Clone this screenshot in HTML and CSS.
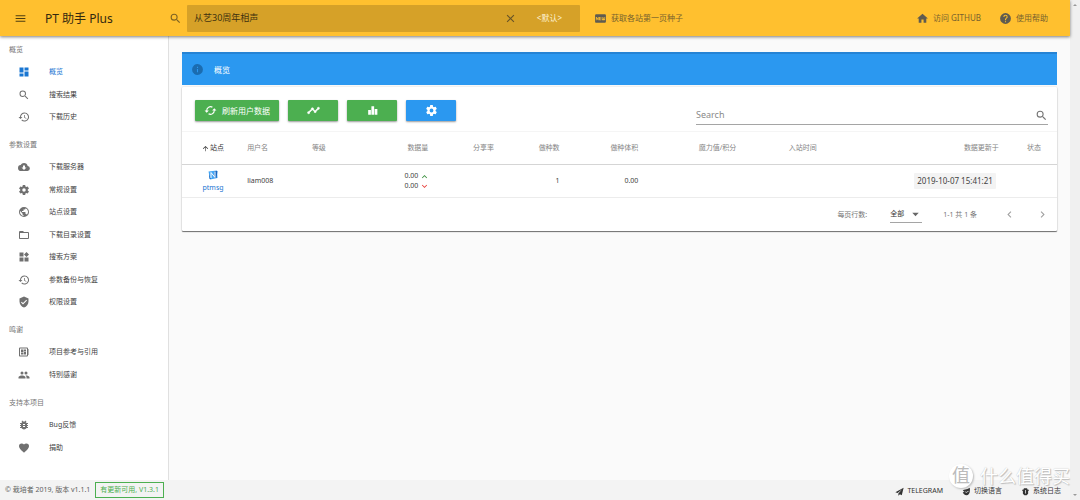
FILE: index.html
```html
<!DOCTYPE html>
<html lang="zh-CN">
<head>
    <meta charset="utf-8">
    <title>PT 助手 Plus</title>
    <link rel="stylesheet" href="styles.css">
</head>
<body>
    <!-- Icons -->
    <svg class="sprite" aria-hidden="true">
        <symbol id="menu" viewBox="0 0 24 24"><path d="M3 18h18v-2H3v2zm0-5h18v-2H3v2zm0-7v2h18V6H3z"/></symbol>
        <symbol id="search" viewBox="0 0 24 24"><path d="M15.5 14h-.79l-.28-.27A6.47 6.47 0 0 0 16 9.5 6.5 6.5 0 1 0 9.5 16c1.61 0 3.09-.59 4.23-1.57l.27.28v.79l5 4.99L20.49 19l-4.99-5zm-6 0a4.5 4.5 0 1 1 0-9 4.5 4.5 0 0 1 0 9z"/></symbol>
        <symbol id="close" viewBox="0 0 24 24"><path d="M19 6.41 17.59 5 12 10.59 6.41 5 5 6.41 10.59 12 5 17.59 6.41 19 12 13.41 17.59 19 19 17.59 13.41 12z"/></symbol>
        <symbol id="new" viewBox="0 0 24 24"><path d="M20 4H4a2 2 0 0 0-2 2v12c0 1.1.9 2 2 2h16a2 2 0 0 0 2-2V6a2 2 0 0 0-2-2zM8.5 15H7.3l-2.55-3.5V15H3.5V9h1.25l2.5 3.5V9H8.5v6zm5-4.74H11v1.12h2.5v1.26H11v1.11h2.5V15h-4V9h4v1.26zm7 3.74a1 1 0 0 1-1 1h-4a1 1 0 0 1-1-1V9h1.25v4.51h1.13V9.99h1.25v3.51h1.12V9h1.25v5z"/></symbol>
        <symbol id="home" viewBox="0 0 24 24"><path d="M10 20v-6h4v6h5v-8h3L12 3 2 12h3v8z"/></symbol>
        <symbol id="help" viewBox="0 0 24 24"><path d="M12 2a10 10 0 1 0 0 20 10 10 0 0 0 0-20zm1 17h-2v-2h2v2zm2.07-7.75-.9.92C13.45 12.9 13 13.5 13 15h-2v-.5c0-1.1.45-2.1 1.17-2.83l1.24-1.26A2 2 0 1 0 10 9H8a4 4 0 0 1 8 0c0 .88-.36 1.68-.93 2.25z"/></symbol>
        <symbol id="dashboard" viewBox="0 0 24 24"><path d="M3 13h8V3H3v10zm0 8h8v-6H3v6zm10 0h8V11h-8v10zm0-18v6h8V3h-8z"/></symbol>
        <symbol id="history" viewBox="0 0 24 24"><path d="M13 3a9 9 0 0 0-9 9H1l3.89 3.89.07.14L9 12H6a7 7 0 1 1 2.06 4.94l-1.42 1.42A9 9 0 1 0 13 3zm-1 5v5l4.28 2.54.72-1.21-3.5-2.08V8H12z"/></symbol>
        <symbol id="cloud" viewBox="0 0 24 24"><path d="M19.35 10.04A7.49 7.49 0 0 0 12 4C9.11 4 6.6 5.64 5.35 8.04A6 6 0 0 0 6 20h13a5 5 0 0 0 .35-9.96zM17 13l-5 5-5-5h3V9h4v4h3z"/></symbol>
        <symbol id="settings" viewBox="0 0 24 24"><path d="M19.43 12.98c.04-.32.07-.64.07-.98s-.03-.66-.07-.98l2.11-1.65c.19-.15.24-.42.12-.64l-2-3.46c-.12-.22-.39-.3-.61-.22l-2.49 1c-.52-.4-1.08-.73-1.69-.98l-.38-2.65A.49.49 0 0 0 14 2h-4c-.25 0-.46.18-.49.42l-.38 2.65c-.61.25-1.17.59-1.69.98l-2.49-1c-.23-.09-.49 0-.61.22l-2 3.46c-.13.22-.07.49.12.64l2.11 1.65c-.04.32-.07.65-.07.98s.03.66.07.98l-2.11 1.65c-.19.15-.24.42-.12.64l2 3.46c.12.22.39.3.61.22l2.49-1c.52.4 1.08.73 1.69.98l.38 2.65c.03.24.24.42.49.42h4c.25 0 .46-.18.49-.42l.38-2.65c.61-.25 1.17-.59 1.69-.98l2.49 1c.23.09.49 0 .61-.22l2-3.46c.12-.22.07-.49-.12-.64l-2.11-1.65zM12 15.5a3.5 3.5 0 1 1 0-7 3.5 3.5 0 0 1 0 7z"/></symbol>
        <symbol id="globe" viewBox="0 0 24 24"><path d="M12 2a10 10 0 1 0 0 20 10 10 0 0 0 0-20zm-1 17.93A8 8 0 0 1 4.21 10.21L9 15v1c0 1.1.9 2 2 2v1.93zm6.9-2.54A2 2 0 0 0 16 16h-1v-3a1 1 0 0 0-1-1H8v-2h2a1 1 0 0 0 1-1V7h2a2 2 0 0 0 2-2v-.41a8 8 0 0 1 2.9 12.8z"/></symbol>
        <symbol id="folder" viewBox="0 0 24 24"><path d="M20 6h-8l-2-2H4a2 2 0 0 0-2 2v12c0 1.1.9 2 2 2h16a2 2 0 0 0 2-2V8a2 2 0 0 0-2-2zm0 12H4V8h16v10z"/></symbol>
        <symbol id="widgets" viewBox="0 0 24 24"><path d="M3 3h8v8H3zM3 13h8v8H3zM13 13h8v8h-8zM17 2l5 5-5 5-5-5z"/></symbol>
        <symbol id="shield" viewBox="0 0 24 24"><path d="M12 1 3 5v6c0 5.55 3.84 10.74 9 12 5.16-1.26 9-6.45 9-12V5l-9-4zm-2 16-4-4 1.41-1.41L10 14.17l6.59-6.59L18 9l-8 8z"/></symbol>
        <symbol id="board" viewBox="0 0 24 24"><path d="M22 9V7h-2V5a2 2 0 0 0-2-2H4a2 2 0 0 0-2 2v14c0 1.1.9 2 2 2h14a2 2 0 0 0 2-2v-2h2v-2h-2v-2h2v-2h-2V9h2zm-4 10H4V5h14v14zM6 13h5v4H6zm6-6h4v3h-4zM6 7h5v5H6zm6 4h4v6h-4z"/></symbol>
        <symbol id="people" viewBox="0 0 24 24"><path d="M16 11a3 3 0 1 0 0-6 3 3 0 0 0 0 6zm-8 0a3 3 0 1 0 0-6 3 3 0 0 0 0 6zm0 2c-2.33 0-7 1.17-7 3.5V19h14v-2.5C15 14.17 10.33 13 8 13zm8 0c-.29 0-.62.02-.97.05 1.16.84 1.97 1.97 1.97 3.45V19h6v-2.5c0-2.33-4.67-3.5-7-3.5z"/></symbol>
        <symbol id="bug" viewBox="0 0 24 24"><path d="M20 8h-2.81a5.99 5.99 0 0 0-1.82-1.96L17 4.41 15.59 3l-2.17 2.17a6 6 0 0 0-2.83 0L8.41 3 7 4.41l1.62 1.63C7.88 6.55 7.26 7.22 6.81 8H4v2h2.09c-.05.33-.09.66-.09 1v1H4v2h2v1c0 .34.04.67.09 1H4v2h2.81a6 6 0 0 0 10.38 0H20v-2h-2.09c.05-.33.09-.66.09-1v-1h2v-2h-2v-1c0-.34-.04-.67-.09-1H20V8zm-6 8h-4v-2h4v2zm0-4h-4v-2h4v2z"/></symbol>
        <symbol id="heart" viewBox="0 0 24 24"><path d="m12 21.35-1.45-1.32C5.4 15.36 2 12.28 2 8.5A5.45 5.45 0 0 1 7.5 3c1.74 0 3.41.81 4.5 2.09A6.04 6.04 0 0 1 16.5 3 5.45 5.45 0 0 1 22 8.5c0 3.78-3.4 6.86-8.55 11.54L12 21.35z"/></symbol>
        <symbol id="info" viewBox="0 0 24 24"><path d="M12 2a10 10 0 1 0 0 20 10 10 0 0 0 0-20zm1 15h-2v-6h2v6zm0-8h-2V7h2v2z"/></symbol>
        <symbol id="refresh" viewBox="0 0 24 24"><path d="m19 8-4 4h3a6 6 0 0 1-8.8 5.3l-1.46 1.46A8 8 0 0 0 20 12h3l-4-4zM6 12a6 6 0 0 1 8.8-5.3l1.46-1.46A8 8 0 0 0 4 12H1l4 4 4-4H6z"/></symbol>
        <symbol id="timeline" viewBox="0 0 24 24"><path d="M23 8a2 2 0 0 1-2.51 1.93l-3.56 3.55a2 2 0 1 1-3.86 0l-2.55-2.55c-.33.09-.71.09-1.04 0l-4.55 4.56A2 2 0 1 1 3 14c.18 0 .35.02.51.07l4.56-4.55a2 2 0 1 1 3.86 0l2.55 2.55c.33-.09.71-.09 1.04 0l3.55-3.56A2 2 0 1 1 23 8z" stroke="currentColor"/></symbol>
        <symbol id="chart" viewBox="0 0 24 24"><path d="M4 11h5v9H4zM10 4h5v16h-5zM16 9h5v11h-5z"/></symbol>
        <symbol id="up" viewBox="0 0 24 24"><path d="m3 12 2 2 6-6v13h2V8l6 6 2-2-9-9z"/></symbol>
        <symbol id="chevron-up" viewBox="0 0 24 24"><path d="m12 7-9 9 2 2 7-7 7 7 2-2z"/></symbol>
        <symbol id="chevron-down" viewBox="0 0 24 24"><path d="m12 17-9-9 2-2 7 7 7-7 2 2z"/></symbol>
        <symbol id="left" viewBox="0 0 24 24"><path d="M15.41 7.41 14 6l-6 6 6 6 1.41-1.41L10.83 12z"/></symbol>
        <symbol id="right" viewBox="0 0 24 24"><path d="M10 6 8.59 7.41 13.17 12l-4.58 4.59L10 18l6-6z"/></symbol>
        <symbol id="drop" viewBox="0 0 24 24"><path d="m5 8 7 8 7-8z"/></symbol>
        <symbol id="plane" viewBox="0 0 24 24"><path d="M23 2 1 14l6 2L19 6 9 17v6l4-4 5 3z"/></symbol>
        <symbol id="language" viewBox="0 0 24 24"><path d="M2 9c4-4 8-2 12-4l7-3v7c0 8-4 13-9 13-5 0-9-4-10-8l5-1zm6 4 4 2 6-4-1-1-5 3-3-1z"/></symbol>
        <symbol id="log" viewBox="0 0 24 24"><path d="M8 3h8l2 4h3v3h-2v8l-4 4H9l-4-4v-8H3V7h3zm3 5v9h2V8z"/></symbol>
    </svg>

    <div class="app">
        <header class="topbar">
            <button class="icon-btn menu-btn" aria-label="菜单"><svg class="icon-lg"><use href="#menu"/></svg></button>
            <h1 class="brand">PT 助手 Plus</h1>
            <label class="search-icon" for="keyword"><svg class="icon-lg"><use href="#search"/></svg></label>
            <div class="search-box">
                <input type="text" id="keyword" value="从艺30周年相声" aria-label="搜索">
                <button class="icon-btn" aria-label="清除"><svg class="icon-lg"><use href="#close"/></svg></button>
                <button class="scheme">&lt;默认&gt;</button>
            </div>
            <a class="top-link" href="#"><svg class="icon-lg"><use href="#new"/></svg>获取各站第一页种子</a>
            <nav class="top-right">
                <a class="top-link" href="#"><svg class="icon-lg"><use href="#home"/></svg>访问 GITHUB</a>
                <a class="top-link" href="#"><svg class="icon-lg"><use href="#help"/></svg>使用帮助</a>
            </nav>
        </header>

        <div class="body">
            <nav class="sidebar">
                <h2>概览</h2>
                <ul>
                    <li><a class="active" href="#"><svg class="icon"><use href="#dashboard"/></svg>概览</a></li>
                    <li><a href="#"><svg class="icon"><use href="#search"/></svg>搜索结果</a></li>
                    <li><a href="#"><svg class="icon"><use href="#history"/></svg>下载历史</a></li>
                </ul>
                <h2>参数设置</h2>
                <ul>
                    <li><a href="#"><svg class="icon"><use href="#cloud"/></svg>下载服务器</a></li>
                    <li><a href="#"><svg class="icon"><use href="#settings"/></svg>常规设置</a></li>
                    <li><a href="#"><svg class="icon"><use href="#globe"/></svg>站点设置</a></li>
                    <li><a href="#"><svg class="icon"><use href="#folder"/></svg>下载目录设置</a></li>
                    <li><a href="#"><svg class="icon"><use href="#widgets"/></svg>搜索方案</a></li>
                    <li><a href="#"><svg class="icon"><use href="#history"/></svg>参数备份与恢复</a></li>
                    <li><a href="#"><svg class="icon"><use href="#shield"/></svg>权限设置</a></li>
                </ul>
                <h2>鸣谢</h2>
                <ul>
                    <li><a href="#"><svg class="icon"><use href="#board"/></svg>项目参考与引用</a></li>
                    <li><a href="#"><svg class="icon"><use href="#people"/></svg>特别感谢</a></li>
                </ul>
                <h2>支持本项目</h2>
                <ul>
                    <li><a href="#"><svg class="icon"><use href="#bug"/></svg>Bug反馈</a></li>
                    <li><a href="#"><svg class="icon"><use href="#heart"/></svg>捐助</a></li>
                </ul>
            </nav>

            <main class="content">
                <div class="alert"><svg class="icon-lg"><use href="#info"/></svg>概览</div>

                <section class="card">
                    <div class="toolbar">
                        <button class="btn btn-wide"><svg class="icon-lg"><use href="#refresh"/></svg>刷新用户数据</button>
                        <button class="btn" aria-label="趋势"><svg class="icon-lg"><use href="#timeline"/></svg></button>
                        <button class="btn" aria-label="统计"><svg class="icon-lg"><use href="#chart"/></svg></button>
                        <button class="btn btn-blue" aria-label="设置"><svg class="icon-lg"><use href="#settings"/></svg></button>
                        <div class="filter">
                            <input type="text" id="filter" placeholder="Search">
                            <label for="filter" aria-label="Search"><svg class="icon-lg"><use href="#search"/></svg></label>
                        </div>
                    </div>

                    <table>
                        <colgroup>
                            <col class="c-site"><col class="c-user"><col class="c-level"><col class="c-data">
                            <col class="c-ratio"><col class="c-seeds"><col class="c-size"><col class="c-bonus">
                            <col class="c-join"><col class="c-update"><col class="c-status">
                        </colgroup>
                        <thead>
                            <tr>
                                <th class="center sorted"><svg class="icon-xs"><use href="#up"/></svg>站点</th>
                                <th>用户名</th>
                                <th>等级</th>
                                <th class="right">数据量</th>
                                <th class="right">分享率</th>
                                <th class="right">做种数</th>
                                <th class="right">做种体积</th>
                                <th class="right">魔力值/积分</th>
                                <th class="center">入站时间</th>
                                <th class="right">数据更新于</th>
                                <th class="right">状态</th>
                            </tr>
                        </thead>
                        <tbody>
                            <tr>
                                <td class="center">
                                    <a class="site" href="#">
                                        <svg class="site-logo" viewBox="0 0 20 20"><path fill="#42a5f5" d="M1 3 18 1 19 16 4 19z"/><path fill="#1565c0" d="M13 2h6l-2 14h-4zM2 8l4 9-3 1z"/><path fill="none" stroke="#fff" stroke-width="2" d="M6 16V5l8 10V3"/></svg>
                                        ptmsg
                                    </a>
                                </td>
                                <td>liam008</td>
                                <td></td>
                                <td class="right">
                                    <div class="amount">0.00 <svg class="icon-xs green"><use href="#chevron-up"/></svg></div>
                                    <div class="amount">0.00 <svg class="icon-xs red"><use href="#chevron-down"/></svg></div>
                                </td>
                                <td></td>
                                <td class="right">1</td>
                                <td class="right">0.00</td>
                                <td></td>
                                <td></td>
                                <td class="right"><span class="chip">2019-10-07 15:41:21</span></td>
                                <td></td>
                            </tr>
                        </tbody>
                    </table>

                    <div class="pager">
                        <label for="rows">每页行数:</label>
                        <div class="select">
                            <select id="rows"><option>全部</option></select>
                            <svg class="icon"><use href="#drop"/></svg>
                        </div>
                        <span>1-1 共 1 条</span>
                        <button class="icon-btn" aria-label="上一页" disabled><svg class="icon-lg"><use href="#left"/></svg></button>
                        <button class="icon-btn" aria-label="下一页" disabled><svg class="icon-lg"><use href="#right"/></svg></button>
                    </div>
                </section>
            </main>
        </div>

        <footer class="footer">
            <span>© 栽培者 2019, 版本 v1.1.1</span>
            <a class="update" href="#">有更新可用, V1.3.1</a>
            <nav class="footer-links">
                <a href="#"><svg class="icon-sm"><use href="#plane"/></svg>TELEGRAM</a>
                <a href="#"><svg class="icon-sm"><use href="#language"/></svg>切换语言</a>
                <a href="#"><svg class="icon-sm"><use href="#log"/></svg>系统日志</a>
            </nav>
        </footer>
    </div>

    <div class="scrollbar" aria-hidden="true"><i class="tri-up"></i><i class="tri-down"></i></div>
    <div class="watermark"><span class="seal">值</span>什么值得买</div>
</body>
</html>
```
FILE: styles.css
```css
* {
    box-sizing: border-box;
}

body {
    margin: 0;
    display: flex;
    height: 100vh;
    overflow: hidden;
    background: #fafafa;
    color: #424242;
    font-family: "Noto Sans", "Noto Sans CJK SC", sans-serif;
    font-size: 7px;
    line-height: 10px;
}

a {
    color: inherit;
    text-decoration: none;
}

button, input, select {
    font: inherit;
    color: inherit;
    border: none;
    background: none;
    padding: 0;
    outline: none;
}

svg {
    fill: currentColor;
    flex: none;
}

.sprite {
    display: none;
}

.icon-xs {
    width: 7px;
    height: 7px;
}

.icon-sm {
    width: 9px;
    height: 9px;
}

.icon {
    width: 12px;
    height: 12px;
}

.icon-lg {
    width: 13px;
    height: 13px;
}

.icon-btn {
    display: flex;
}

.app {
    flex: 1;
    min-width: 0;
    display: flex;
    flex-direction: column;
}

/* Top bar */
.topbar {
    display: flex;
    align-items: center;
    height: 36px;
    padding: 0 22px 0 14px;
    background: #ffc02f;
    color: #665328;
    box-shadow: 0 1px 3px rgba(0, 0, 0, 0.5);
    z-index: 1;
}

.menu-btn {
    color: #4d3c10;
}

.brand {
    width: 124px;
    margin: 0 0 0 18px;
    padding-top: 2px;
    font-size: 12px;
    line-height: 18px;
    font-weight: 400;
    color: #33290f;
}

.search-icon {
    display: flex;
    margin-right: 5px;
    color: #806423;
}

.search-box {
    display: flex;
    align-items: center;
    flex: 0 1 393px;
    height: 27px;
    padding: 0 18px 0 7px;
    border-radius: 1px;
    background: #d6a128;
}

    .search-box input {
        flex: 1;
        min-width: 0;
        font-size: 9px;
        color: #40310f;
    }

.scheme {
    margin-left: 20px;
    font-size: 8px;
    color: #fff3d6;
}

.top-link {
    display: flex;
    align-items: center;
    gap: 4px;
    margin-left: 14px;
    font-size: 8px;
    color: #78622e;
}

    .top-link svg {
        color: #5f5b50;
    }

.top-right {
    display: flex;
    gap: 4px;
    margin-left: auto;
}

/* Side menu */
.body {
    display: flex;
    flex: 1;
    min-height: 0;
}

.sidebar {
    width: 169px;
    padding-top: 2px;
    border-right: 1px solid #e0e0e0;
    background: #fff;
}

    .sidebar h2 {
        margin: 0;
        padding-left: 9px;
        font-size: 7px;
        line-height: 23px;
        font-weight: 400;
        color: #757575;
    }

    .sidebar ul {
        margin: 0 0 5px;
        padding: 0;
        list-style: none;
    }

    .sidebar li {
        height: 22px;
    }

        .sidebar li:nth-child(even) {
            height: 23px;
        }

    .sidebar a {
        display: flex;
        align-items: center;
        gap: 19px;
        height: 100%;
        padding-left: 18px;
    }

        .sidebar a svg {
            color: #707070;
        }

        .sidebar a.active,
        .sidebar a.active svg {
            color: #1976d2;
        }

/* Content */
.content {
    flex: 1;
    min-width: 0;
    padding: 16px 13px;
}

.alert {
    display: flex;
    align-items: center;
    gap: 10px;
    height: 33px;
    padding-left: 9px;
    border-top: 2px solid #2583d4;
    background: #2b98f0;
    color: #fff;
    font-size: 8px;
}

    .alert svg {
        color: #1b6cb0;
    }

.card {
    margin-top: 2px;
    border-radius: 1px;
    background: #fff;
    box-shadow: 0 1px 1px rgba(0, 0, 0, 0.55), 0 0 2px rgba(0, 0, 0, 0.15);
}

.toolbar {
    display: flex;
    align-items: flex-start;
    gap: 9px;
    padding: 13px 9px 6px 13px;
}

.btn {
    display: flex;
    align-items: center;
    justify-content: center;
    gap: 5px;
    width: 50px;
    height: 21px;
    border-radius: 1px;
    background: #4caf50;
    color: #fff;
    font-size: 8px;
    box-shadow: 0 1px 2px rgba(0, 0, 0, 0.4);
}

.btn-wide {
    width: 84px;
}

.btn-blue {
    background: #2b98f0;
}

.filter {
    display: flex;
    align-items: center;
    flex: 0 1 352px;
    height: 19px;
    margin: 6px 0 0 auto;
    border-bottom: 1px solid #a5a5a5;
    color: #757575;
}

    .filter input {
        flex: 1;
        min-width: 0;
        font-size: 9px;
    }

        .filter input::placeholder {
            color: #8a8a8a;
        }

    .filter label {
        display: flex;
    }

/* Table */
table {
    width: 100%;
    table-layout: fixed;
    border-collapse: collapse;
}

.c-site { width: 7.1%; }
.c-user { width: 7.4%; }
.c-level { width: 8.7%; }
.c-data { width: 5.3%; }
.c-ratio { width: 7.5%; }
.c-seeds { width: 7.5%; }
.c-size { width: 9%; }
.c-bonus { width: 11.2%; }
.c-join { width: 14.5%; }
.c-update { width: 15.5%; }
.c-status { width: 6.3%; }

th, td {
    padding: 0 3px;
    text-align: left;
    white-space: nowrap;
}

th {
    height: 33px;
    border-top: 1px solid #f5f5f5;
    border-bottom: 1px solid #d5d5d5;
    font-weight: 400;
    color: #858585;
}

    th:last-child {
        padding-right: 16px;
    }

td {
    height: 33px;
    border-bottom: 1px solid #ececec;
}

.center {
    text-align: center;
}

.right {
    text-align: right;
}

.sorted {
    color: #333;
}

    .sorted svg {
        vertical-align: middle;
        margin-right: 1px;
    }

.site {
    display: flex;
    flex-direction: column;
    align-items: center;
    gap: 3px;
    color: #1976d2;
}

.site-logo {
    width: 10px;
    height: 10px;
}

.amount {
    display: flex;
    align-items: center;
    justify-content: flex-end;
    gap: 3px;
}

.green {
    color: #388e3c;
}

.red {
    color: #e53935;
}

.chip {
    display: inline-block;
    margin-right: 3px;
    padding: 3px;
    border-radius: 1px;
    background: #f3f3f3;
    font-size: 8px;
}

.pager {
    display: flex;
    align-items: center;
    justify-content: flex-end;
    height: 33px;
    padding-right: 8px;
    color: #757575;
}

.select {
    display: flex;
    align-items: center;
    width: 32px;
    height: 17px;
    margin: 0 21px 0 23px;
    border-bottom: 1px solid #a5a5a5;
    color: #333;
}

    .select select {
        appearance: none;
        flex: 1;
        min-width: 0;
    }

    .select svg {
        width: 13px;
        height: 11px;
        color: #666;
    }

.pager button {
    margin-left: 20px;
    color: #a0a0a0;
}

.pager span + button {
    margin-left: 26px;
}

/* Footer */
.footer {
    display: flex;
    align-items: center;
    height: 20px;
    padding: 0 9px 0 5px;
    background: #f3f3f3;
    color: #616161;
}

.update {
    margin-left: 5px;
    padding: 2px 4px;
    border: 1px solid #4caf50;
    color: #4caf50;
    font-size: 7px;
}

.footer-links {
    display: flex;
    gap: 19px;
    margin-left: auto;
    padding-top: 2px;
    color: #333;
}

    .footer-links a {
        display: flex;
        align-items: center;
        gap: 3px;
    }

.scrollbar {
    display: flex;
    flex-direction: column;
    justify-content: space-between;
    align-items: center;
    width: 10px;
    padding: 4px 0;
    background: #f0f0f0;
}

.tri-up, .tri-down {
    border: 2px solid transparent;
}

.tri-up {
    border-top: 0;
    border-bottom-color: #999;
}

.tri-down {
    border-bottom: 0;
    border-top-color: #999;
}

.watermark {
    position: absolute;
    right: 10px;
    bottom: 12px;
    z-index: 2;
    display: flex;
    align-items: center;
    gap: 7px;
    color: #fff;
    font-size: 18px;
    line-height: 22px;
    text-shadow: 1px 1px 1px #bbb, 0 0 1px #bbb;
    pointer-events: none;
}

.seal {
    width: 24px;
    height: 24px;
    border-radius: 50%;
    background: #fff;
    color: #bbb;
    text-align: center;
    text-shadow: none;
    box-shadow: 1px 1px 2px #bbb;
}
```
